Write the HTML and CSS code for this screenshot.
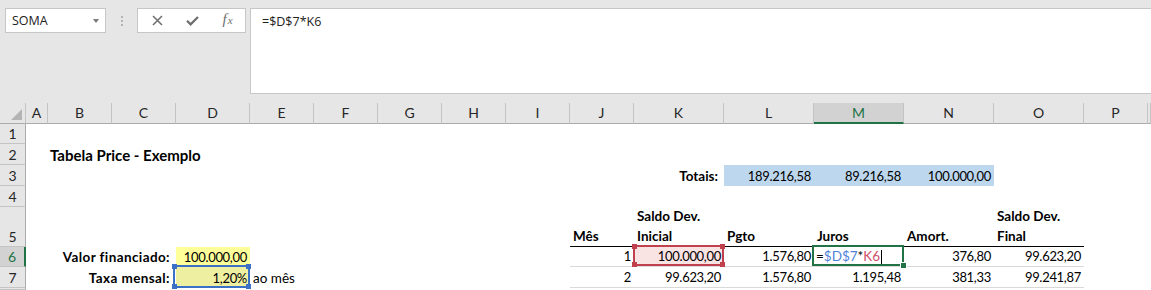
FILE: index.html
```html
<!DOCTYPE html>
<html lang="pt-BR">
<head>
  <meta charset="UTF-8">
  <title>Tabela Price - Exemplo</title>
  <link rel="stylesheet" href="styles.css">
</head>
<body>
  <div class="toolbar">
    <div class="name-box"><span>SOMA</span><span class="caret"></span></div>
    <div class="grip"><i></i><i></i><i></i></div>
    <div class="fx-buttons">
      <span class="btn">
        <svg width="11" height="11" viewBox="0 0 11 11"><path d="M1 1L10 10M10 1L1 10" stroke="#6d6d6d" stroke-width="1.5" fill="none"/></svg>
      </span>
      <span class="btn">
        <svg width="13" height="10" viewBox="0 0 13 10"><path d="M1 4.8L4.6 8.4L12 1" stroke="#6d6d6d" stroke-width="2.2" fill="none"/></svg>
      </span>
      <span class="btn fx"><i>f</i><i class="x">x</i></span>
    </div>
    <div class="formula-bar">=$D$7*K6</div>
  </div>

  <div class="sheet">
    <!-- column headers -->
    <div class="col-head corner"><span class="tri"></span></div>
    <div class="col-head">A</div>
    <div class="col-head">B</div>
    <div class="col-head">C</div>
    <div class="col-head">D</div>
    <div class="col-head">E</div>
    <div class="col-head">F</div>
    <div class="col-head">G</div>
    <div class="col-head">H</div>
    <div class="col-head">I</div>
    <div class="col-head">J</div>
    <div class="col-head">K</div>
    <div class="col-head">L</div>
    <div class="col-head active">M</div>
    <div class="col-head">N</div>
    <div class="col-head">O</div>
    <div class="col-head">P</div>
    <div class="col-head"></div>

    <!-- row headers -->
    <div class="row-head">1</div>
    <div class="row-head">2</div>
    <div class="row-head">3</div>
    <div class="row-head">4</div>
    <div class="row-head">5</div>
    <div class="row-head active">6</div>
    <div class="row-head">7</div>
    <div class="row-head"></div>

    <!-- row 2 -->
    <div class="cell bold title r-2">Tabela Price - Exemplo</div>

    <!-- row 3 -->
    <div class="cell bold num totals-label c-k r-3">Totais:</div>
    <div class="cell num fig total c-l r-3">189.216,58</div>
    <div class="cell num fig total c-m r-3">89.216,58</div>
    <div class="cell num fig total c-n r-3">100.000,00</div>

    <!-- row 5 -->
    <div class="cell bold head c-j r-5"><span>Mês</span></div>
    <div class="cell bold head c-k r-5"><span>Saldo Dev.<br>Inicial</span></div>
    <div class="cell bold head c-l r-5"><span>Pgto</span></div>
    <div class="cell bold head c-m r-5"><span>Juros</span></div>
    <div class="cell bold head c-n r-5"><span>Amort.</span></div>
    <div class="cell bold head c-o r-5"><span>Saldo Dev.<br>Final</span></div>

    <!-- row 6 -->
    <div class="cell bold label r-6">Valor financiado:</div>
    <div class="cell num fig input c-d r-6">100.000,00</div>
    <div class="cell num fig line c-j r-6">1</div>
    <div class="cell num fig line ref-red c-k r-6">100.000,00<span class="frame red"><i class="tl"></i><i class="tr"></i><i class="bl"></i><i class="br"></i></span></div>
    <div class="cell num fig line c-l r-6">1.576,80</div>
    <div class="cell line editing c-m r-6">=<span class="t-blue">$D$7</span>*<span class="t-red">K6</span><span class="cursor"></span><span class="frame green"><i class="handle"></i></span></div>
    <div class="cell num fig line c-n r-6">376,80</div>
    <div class="cell num fig line c-o r-6">99.623,20</div>

    <!-- row 7 -->
    <div class="cell bold label r-7">Taxa mensal:</div>
    <div class="cell num fig input picked c-d r-7">1,20%<span class="frame blue"><i class="tl"></i><i class="tr"></i><i class="bl"></i><i class="br"></i></span></div>
    <div class="cell c-e r-7">ao mês</div>
    <div class="cell num fig line c-j r-7">2</div>
    <div class="cell num fig line c-k r-7">99.623,20</div>
    <div class="cell num fig line c-l r-7">1.576,80</div>
    <div class="cell num fig line c-m r-7">1.195,48</div>
    <div class="cell num fig line c-n r-7">381,33</div>
    <div class="cell num fig line c-o r-7">99.241,87</div>
  </div>
</body>
</html>
```

FILE: styles.css
```css
html, body {
  margin: 0;
  width: 1151px;
  height: 290px;
  overflow: hidden;
}

body {
  background: #e6e6e6;
  font-family: "Lato", "Liberation Sans", sans-serif;
}

/* formula bar */
.toolbar {
  display: flex;
  align-items: flex-start;
  height: 103px;
  box-sizing: border-box;
  padding: 8px 0 0 5px;
  font-family: "Open Sans", sans-serif;
  font-size: 12.5px;
  color: #222;
}

.name-box {
  width: 101px;
  height: 25px;
  box-sizing: border-box;
  border: 1px solid #c6c6c6;
  background: #fff;
  display: flex;
  align-items: center;
  justify-content: space-between;
  padding: 0 6px;
}

.caret {
  border-left: 3.5px solid transparent;
  border-right: 3.5px solid transparent;
  border-top: 4px solid #7a7a7a;
}

.grip {
  width: 31px;
  height: 25px;
  display: flex;
  flex-direction: column;
  align-items: center;
  justify-content: center;
  gap: 2px;
}

.grip i {
  width: 2px;
  height: 2px;
  background: #b4b4b4;
}

.fx-buttons {
  width: 109px;
  height: 25px;
  box-sizing: border-box;
  border: 1px solid #c6c6c6;
  background: #fff;
  display: flex;
  padding-left: 2px;
}

.btn {
  width: 35px;
  display: flex;
  align-items: center;
  justify-content: center;
}

.fx {
  font-family: "Liberation Serif", serif;
  color: #6d6d6d;
  font-size: 15px;
  align-items: baseline;
  padding-top: 2px;
}

.fx .x {
  font-size: 11px;
  margin-left: 1px;
}

.formula-bar {
  flex: 1;
  height: 86px;
  box-sizing: border-box;
  margin-left: 4px;
  border: 1px solid #c6c6c6;
  border-right: 0;
  background: #fff;
  padding: 5px 11px;
  line-height: 16px;
}

/* sheet */
.sheet {
  display: grid;
  grid-template-columns: 26px 22px 64px 64px 74px 64px 64px 64px 64px 64px 64px 90px 90px 90px 90px 90px 64px 1fr;
  grid-template-rows: 21px 20px 21px 21px 21px 40px 20px 21px 1fr;
  height: 187px;
  background: #fff;
  font-size: 13.5px;
  line-height: 19px;
  color: #000;
}

.col-head {
  background: #e6e6e6;
  border-right: 1px solid #c4c4c4;
  border-bottom: 1px solid #ababab;
  text-align: center;
  line-height: 20px;
  font-size: 14px;
  color: #262626;
}

.col-head.active {
  background: #d2d2d2;
  color: #217346;
  border-bottom: 2px solid #217346;
}

.corner {
  display: flex;
  align-items: flex-end;
  justify-content: flex-end;
  padding: 0 3px 3px 0;
}

.tri {
  width: 0;
  height: 0;
  border-left: 11px solid transparent;
  border-bottom: 11px solid #b4b4b4;
}

.row-head {
  grid-column: 1;
  background: #e6e6e6;
  border-right: 1px solid #ababab;
  border-bottom: 1px solid #c4c4c4;
  display: flex;
  align-items: flex-end;
  justify-content: center;
  overflow: hidden;
  font-size: 14px;
  color: #262626;
}

.row-head.active {
  background: #d2d2d2;
  color: #217346;
  border-right: 2px solid #217346;
}

.cell {
  display: flex;
  align-items: flex-end;
  padding: 0 3px;
  white-space: nowrap;
}

.num { justify-content: flex-end; }
.bold { font-weight: 700; }

.fig {
  font-size: 13px;
  letter-spacing: -0.3px;
}

.c-d { grid-column: 5; }
.c-e { grid-column: 6; }
.c-j { grid-column: 11; }
.c-k { grid-column: 12; }
.c-l { grid-column: 13; }
.c-m { grid-column: 14; }
.c-n { grid-column: 15; }
.c-o { grid-column: 16; }

.r-2 { grid-row: 3; }
.r-3 { grid-row: 4; }
.r-5 { grid-row: 6; }
.r-6 { grid-row: 7; }
.r-7 { grid-row: 8; }

.title {
  grid-column: 3 / 7;
  padding-left: 2px;
  font-size: 15px;
}

.label {
  grid-column: 3 / 5;
  justify-content: flex-end;
  padding-right: 6px;
  letter-spacing: 0.4px;
}

.totals-label { padding-right: 6px; }
.total { background: #bdd7ee; }

.head {
  border-bottom: 1px solid #000;
  line-height: 20px;
}

.line { border-bottom: 1px solid #d9d9d9; }

.input { background: #ffff9a; }
.input.picked { background: #efefa2; }
.ref-red { background: #fae3e3; }

.editing {
  position: relative;
  padding-left: 2px;
}

.t-blue { color: #4f82d8; }
.t-red { color: #d0506a; }

.cursor {
  width: 1px;
  height: 16px;
  background: #000;
  margin-left: 1px;
}

/* reference frames drawn over the cells */
.ref-red, .picked { position: relative; }

.frame {
  position: absolute;
  top: -2px;
  left: -2px;
  right: 0;
  bottom: 0;
  border: 2px solid;
}

.frame.red { color: #c0404e; left: -1px; }
.frame.blue { color: #3c6fc6; left: -3px; }
.frame.green { color: #217346; }

.frame i {
  position: absolute;
  width: 5px;
  height: 5px;
  background: currentColor;
}

.frame .tl { top: -3px; left: -3px; }
.frame .tr { top: -3px; right: -3px; }
.frame .bl { bottom: -3px; left: -3px; }
.frame .br { bottom: -3px; right: -3px; }

.frame .handle {
  right: -4px;
  bottom: -4px;
  box-shadow: 0 0 0 1px #fff;
}
```
